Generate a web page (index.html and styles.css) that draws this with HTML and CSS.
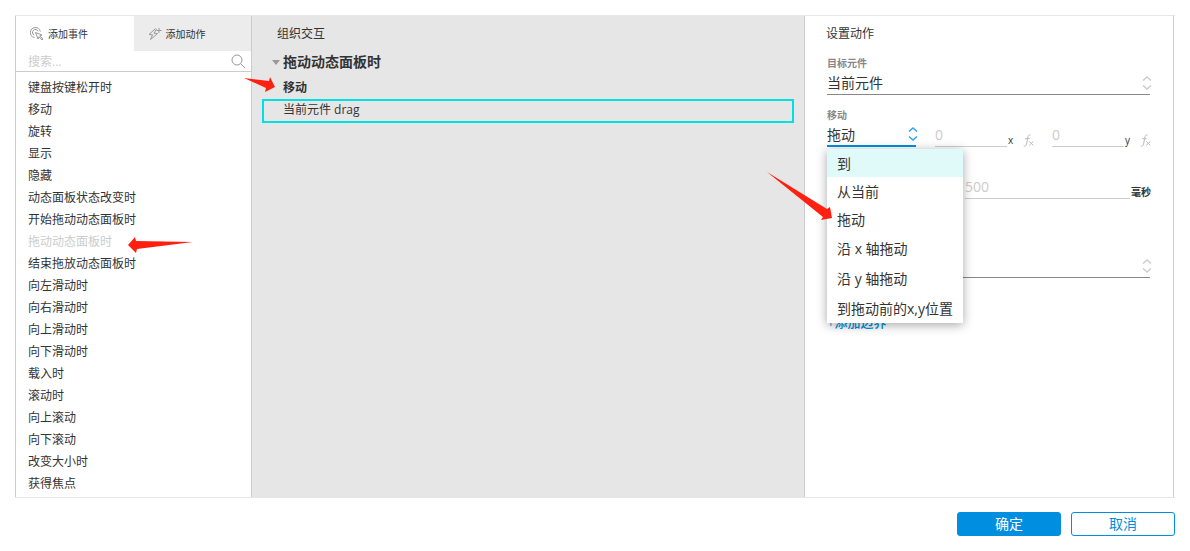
FILE: index.html
```
<!DOCTYPE html>
<html lang="zh-CN">
<head>
    <meta charset="UTF-8">
    <meta name="viewport" content="width=device-width, initial-scale=1.0">
    <title>交互编辑器</title>
    <link rel="stylesheet" href="styles.css">
</head>
<body>
    <svg class="sprite" aria-hidden="true">
        <symbol id="fx" viewBox="0 0 11 13">
            <path d="M7.500 1.300C6.300.3 5.300 1 5 2.600L3.500 10.200C3.200 12 2 12.700.7 11.800M2.200 4.700H6.600M6.300 7.500L10.300 11.300M10.300 7.500L6.300 11.300"/>
        </symbol>
        <symbol id="updown" viewBox="0 0 10 14">
            <path d="M1 4.500L5 1L9 4.500M1 9.500L5 13L9 9.500"/>
        </symbol>
    </svg>

    <main class="dialog">
        <section class="events">
            <div class="tabs" role="tablist">
                <button class="tab active" role="tab" aria-selected="true">
                    <svg class="tab-icon" viewBox="0 0 14 14">
                        <path d="M4.500 10.500A5 5 0 1 1 10.300 4.500M4.200 8.200A3 3 0 1 1 8.200 4.300M5.500 5.500L12 8L9.800 9L13 12L12 13L9 9.800L8 12Z"/>
                    </svg>
                    添加事件
                </button>
                <button class="tab" role="tab" aria-selected="false">
                    <svg class="tab-icon" viewBox="0 0 14 14">
                        <path d="M7.500 1.500L1 7.500L4.500 7.800L2.500 12.500L9.500 6.500L6 6.200L8.500 2M11 1V6M8.500 3.500H13.500"/>
                    </svg>
                    添加动作
                </button>
            </div>
            <div class="search">
                <input type="text" placeholder="搜索..." aria-label="搜索">
                <svg class="search-icon" viewBox="0 0 15 15">
                    <circle cx="6" cy="6" r="5"/>
                    <path d="M9.800 9.800L14 14"/>
                </svg>
            </div>
            <ul class="event-list">
                <li>键盘按键松开时</li>
                <li>移动</li>
                <li>旋转</li>
                <li>显示</li>
                <li>隐藏</li>
                <li>动态面板状态改变时</li>
                <li>开始拖动动态面板时</li>
                <li class="disabled">
                    拖动动态面板时
                    <svg class="arrow arrow-event" viewBox="0 0 65 16">
                        <path d="M0 8L7 0L8 4L65 5L9 12L8 16Z"/>
                    </svg>
                </li>
                <li>结束拖放动态面板时</li>
                <li>向左滑动时</li>
                <li>向右滑动时</li>
                <li>向上滑动时</li>
                <li>向下滑动时</li>
                <li>载入时</li>
                <li>滚动时</li>
                <li>向上滚动</li>
                <li>向下滚动</li>
                <li>改变大小时</li>
                <li>获得焦点</li>
            </ul>
        </section>

        <section class="organize">
            <h2>组织交互</h2>
            <h3><span class="caret"></span>拖动动态面板时</h3>
            <h4>
                移动
                <svg class="arrow arrow-action" viewBox="0 0 31 16">
                    <path d="M0 1L25 4L26 0L31 10L21 15L22 11Z"/>
                </svg>
            </h4>
            <div class="target">当前元件 drag</div>
        </section>

        <section class="settings">
            <h2>设置动作</h2>

            <label class="caption" for="widget">目标元件</label>
            <div class="select">
                <select id="widget"><option>当前元件</option></select>
                <svg class="updown"><use href="#updown"/></svg>
            </div>

            <label class="caption" for="move">移动</label>
            <div class="row">
                <div class="select short open">
                    <select id="move"><option>拖动</option></select>
                    <svg class="updown"><use href="#updown"/></svg>
                    <div class="menu" role="listbox" aria-label="移动">
                        <button role="option" class="current">到</button>
                        <button role="option">从当前</button>
                        <button role="option">拖动</button>
                        <button role="option" class="mixed">沿 x 轴拖动</button>
                        <button role="option" class="mixed">沿 y 轴拖动</button>
                        <button role="option" class="mixed">到拖动前的x,y位置</button>
                        <svg class="arrow arrow-menu" viewBox="0 0 65 48">
                            <path d="M0 0L60 37L63 35L65 46L54 48L56 45Z"/>
                        </svg>
                    </div>
                </div>
                <div class="field">
                    <input type="text" id="moveX" placeholder="0">
                    <label for="moveX">x</label>
                    <svg class="fx"><use href="#fx"/></svg>
                </div>
                <div class="field">
                    <input type="text" id="moveY" placeholder="0">
                    <label for="moveY">y</label>
                    <svg class="fx"><use href="#fx"/></svg>
                </div>
            </div>

            <div class="row duration">
                <div class="select easing">
                    <select aria-label="动画"></select>
                </div>
                <div class="field">
                    <input type="text" id="duration" placeholder="500">
                    <label for="duration" class="unit">毫秒</label>
                </div>
            </div>

            <div class="select path">
                <select aria-label="选项"></select>
                <svg class="updown"><use href="#updown"/></svg>
            </div>

            <a class="add-limit" href="#">+添加边界</a>
        </section>
    </main>

    <footer class="actions">
        <button class="btn primary">确定</button>
        <button class="btn">取消</button>
    </footer>
</body>
</html>
```

FILE: styles.css
```
* {
    box-sizing: border-box;
}

body {
    font-family: "Open Sans", "Noto Sans CJK SC", sans-serif;
    font-size: 12px;
    color: #333;
    background-color: #fff;
    margin: 0;
    padding: 15px 15px 0;
}

h2, h3, h4, ul {
    margin: 0;
    padding: 0;
}

button, input, select {
    font-family: inherit;
    color: inherit;
    background: none;
    border: none;
    border-radius: 0;
    padding: 0;
    margin: 0;
    outline: none;
}

button {
    cursor: pointer;
}

svg {
    fill: none;
    stroke: #999;
    flex: none;
}

.sprite {
    position: absolute;
    width: 0;
    height: 0;
}

.dialog {
    display: grid;
    grid-template-columns: 237px 1fr 370px;
    padding-right: 1px;
    border-top: 1px solid #e6e6e6;
    border-bottom: 1px solid #e6e6e6;
}

h2 {
    font-size: 12px;
    font-weight: normal;
    line-height: 18px;
}

/* Left column */
.events {
    border-left: 1px solid #ccc;
    border-right: 1px solid #ccc;
}

.tabs {
    display: flex;
    height: 35px;
}

.tab {
    flex: 1;
    display: flex;
    align-items: center;
    gap: 4px;
    padding-left: 14px;
    font-size: 10px;
    background-color: #ececec;
}

.tab.active {
    background-color: #fff;
}

.tab-icon {
    width: 14px;
    height: 14px;
}

.search {
    display: flex;
    align-items: center;
    height: 21px;
    padding: 0 5px 0 12px;
    border-bottom: 1px solid #ccc;
}

.search input {
    flex: 1;
    min-width: 0;
    font-size: 12px;
}

::placeholder {
    color: #ccc;
}

.search-icon {
    width: 15px;
    height: 15px;
}

.event-list {
    list-style: none;
    padding: 5px 0 2px 12px;
}

.event-list li {
    position: relative;
    line-height: 22px;
}

.event-list .disabled {
    color: #ccc;
}

/* Middle column */
.organize {
    background-color: #e6e6e6;
    padding: 9px 10px;
}

.organize h2 {
    padding-left: 15px;
}

.organize h3 {
    display: flex;
    align-items: center;
    gap: 3px;
    margin-top: 8px;
    padding-left: 10px;
    font-size: 14px;
    line-height: 22px;
}

.caret {
    border: 4px solid transparent;
    border-top: 5px solid #999;
    border-bottom: none;
}

.organize h4 {
    position: relative;
    margin-top: 4px;
    padding-left: 21px;
    font-size: 12px;
    line-height: 22px;
}

.target {
    height: 24px;
    padding-left: 19px;
    line-height: 18px;
    border: 2px solid #00e0e0;
}

/* Right column */
.settings {
    padding: 9px 22px 0 21px;
    border-left: 1px solid #ccc;
    border-right: 1px solid #ccc;
}

.settings > :not(h2) {
    margin-left: 1px;
}

.caption {
    display: block;
    margin-top: 12px;
    font-size: 10px;
    font-weight: bold;
    line-height: 16px;
    color: #888;
}

.row {
    display: flex;
    gap: 18px;
}

.select {
    position: relative;
    display: flex;
    align-items: center;
    height: 24px;
    margin-right: 1px;
    border-bottom: 1px solid #888;
}

.select select {
    appearance: none;
    flex: 1;
    min-width: 0;
    font-size: 14px;
}

.updown {
    width: 10px;
    height: 14px;
    margin-right: -2px;
    stroke: #ccc;
    stroke-width: 1.5;
}

.short {
    flex: 0 0 89px;
}

.open {
    border-bottom: 2px solid #008fe0;
}

.open .updown {
    stroke: #30a5e8;
}

.field {
    flex: 1;
    display: flex;
    align-items: flex-end;
    min-width: 0;
}

.field input {
    flex: 1;
    min-width: 0;
    height: 24px;
    font-size: 14px;
    border-bottom: 1px solid #ccc;
}

.field label {
    width: 16px;
    padding-left: 1px;
    font-size: 10px;
    line-height: 14px;
    white-space: nowrap;
}

.field .unit {
    width: 21px;
    font-weight: bold;
}

.fx {
    width: 11px;
    height: 13px;
    stroke: #bbb;
}

.duration {
    margin-top: 28px;
}

.easing {
    flex: 0 0 119px;
}

.path {
    margin-top: 55px;
}

.add-limit {
    display: inline-block;
    margin-top: 34px;
    font-size: 13px;
    font-weight: 500;
    line-height: 20px;
    color: #008fe0;
    text-decoration: none;
}

.menu {
    position: absolute;
    top: 26px;
    left: 0;
    z-index: 1;
    width: 136px;
    background-color: #fff;
    box-shadow: 0 2px 10px rgba(0, 0, 0, 0.35);
}

.menu button {
    display: block;
    width: 100%;
    height: 28px;
    padding-left: 10px;
    font-size: 14px;
    text-align: left;
    white-space: nowrap;
}

.menu .mixed {
    height: 30px;
}

.menu .current {
    background-color: #e0fafa;
}

/* Red pointers */
.arrow {
    position: absolute;
    fill: #ff2010;
    stroke: none;
}

.arrow-event {
    top: 6px;
    left: 100px;
    width: 65px;
    height: 16px;
}

.arrow-action {
    top: 0;
    left: -18px;
    width: 31px;
    height: 16px;
}

.arrow-menu {
    top: 23px;
    left: -60px;
    width: 65px;
    height: 48px;
}

/* Dialog buttons */
.actions {
    display: flex;
    justify-content: flex-end;
    gap: 10px;
    margin-top: 14px;
}

.btn {
    width: 104px;
    height: 24px;
    font-size: 14px;
    line-height: 20px;
    color: #008fe0;
    border: 1px solid #008fe0;
    border-radius: 3px;
}

.btn.primary {
    color: #fff;
    background-color: #008fe0;
}
```
